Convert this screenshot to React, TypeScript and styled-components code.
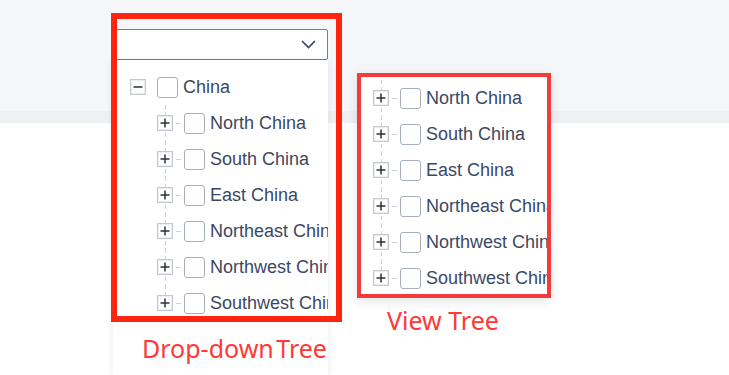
import styled, { createGlobalStyle } from "styled-components";

const GlobalStyle = createGlobalStyle`
  html, body {
    margin: 0;
    padding: 0;
  }
  body {
    font-family: "Liberation Sans", Arial, sans-serif;
    background: #fff;
  }
`;

type Node = {
  label: string;
  expanded?: boolean;
  children?: Node[];
};

const regions: Node[] = [
  { label: "North China" },
  { label: "South China" },
  { label: "East China" },
  { label: "Northeast China" },
  { label: "Northwest China" },
  { label: "Southwest China" },
];

const china: Node = { label: "China", expanded: true, children: regions };

const App = () => {
  return (
    <Page>
      <GlobalStyle />
      <Stage>
        <DropColumn>
          <Select>
            <Chevron width="15" height="9" viewBox="0 0 15 9">
              <path d="M1 1 L7.5 7.5 L14 1" fill="none" stroke="#3b4863" strokeWidth="1.7" />
            </Chevron>
          </Select>
          <DropPanel>
            <Tree $top={9} $left={17}>
              <TreeRow node={china} level={0} last />
              {china.children!.map((n, i) => (
                <TreeRow key={n.label} node={n} level={1} last={i === regions.length - 1} />
              ))}
            </Tree>
            <Caption $indent={29} $gap={12} $tight>
              Drop-down Tree
            </Caption>
          </DropPanel>
          <RedFrame />
        </DropColumn>

        <ViewColumn>
          <ViewPanel>
            <Tree $top={3} $left={12}>
              {regions.map((n, i) => (
                <TreeRow key={n.label} node={n} level={0} lined last={i === regions.length - 1} />
              ))}
            </Tree>
          </ViewPanel>
          <Caption $indent={30} $gap={7}>
            View Tree
          </Caption>
        </ViewColumn>
      </Stage>
    </Page>
  );
};

const TreeRow = ({
  node,
  level,
  last,
  lined,
}: {
  node: Node;
  level: number;
  last?: boolean;
  lined?: boolean;
}) => {
  const showLine = level > 0 || !!lined;
  return (
    <Row $level={level}>
      <ToggleCell $line={showLine} $last={!!last}>
        <ToggleIcon open={!!node.expanded} />
      </ToggleCell>
      <Check />
      <Label>{node.label}</Label>
    </Row>
  );
};

const ToggleIcon = ({ open }: { open: boolean }) => (
  <ToggleSvg width="16" height="16" viewBox="0 0 16 16">
    <rect x="0.5" y="0.5" width="15" height="15" fill="#fff" stroke="#c4c8d0" />
    <rect x="1.5" y="1.5" width="13" height="13" fill="none" stroke="#eceef2" />
    <line x1="3.5" y1="8" x2="12.5" y2="8" stroke="#2a2f38" strokeWidth="1.5" />
    {!open && <line x1="8" y1="3.5" x2="8" y2="12.5" stroke="#2a2f38" strokeWidth="1.5" />}
  </ToggleSvg>
);

export default App;

const Page = styled.div`
  min-height: 100vh;
  background: linear-gradient(
    to bottom,
    #f5f6f8 0,
    #f5f6f8 111px,
    #eff0f2 111px,
    #eff0f2 123px,
    #ffffff 123px
  );
`;

const Stage = styled.div`
  display: flex;
  align-items: flex-start;
  gap: 29px;
  padding: 29px 0 0 113px;
`;

const DropColumn = styled.div`
  position: relative;
  width: 215px;
  display: flex;
  flex-direction: column;
`;

const Select = styled.div`
  box-sizing: border-box;
  height: 31px;
  width: 214px;
  margin-left: 1px;
  border: 1px solid #3a87f5;
  border-radius: 2px;
  background: #fff;
  display: flex;
  align-items: center;
  justify-content: flex-end;
  padding-right: 11px;
`;

const Chevron = styled.svg`
  display: block;
`;

const DropPanel = styled.div`
  height: 315px;
  background: #fff;
  box-shadow: 0 2px 8px rgba(20, 30, 50, 0.1);
  overflow: hidden;
`;

const RedFrame = styled.div`
  position: absolute;
  left: -2px;
  top: -16px;
  width: 231px;
  height: 309px;
  box-sizing: border-box;
  border: 6px solid #ff2410;
  pointer-events: none;
`;

const ViewColumn = styled.div`
  margin-top: 44px;
  display: flex;
  flex-direction: column;
`;

const ViewPanel = styled.div`
  box-sizing: border-box;
  width: 194px;
  height: 225px;
  border: 4px solid #f43a3a;
  background: #fff;
  box-shadow: 0 3px 10px rgba(20, 30, 50, 0.12);
  overflow: hidden;
`;

const Tree = styled.div<{ $top: number; $left: number }>`
  display: flex;
  flex-direction: column;
  padding: ${(p) => p.$top}px 0 0 ${(p) => p.$left}px;
`;

const Row = styled.div<{ $level: number }>`
  display: flex;
  align-items: center;
  height: 36px;
  padding-left: ${(p) => p.$level * 27}px;
  white-space: nowrap;
`;

const ToggleCell = styled.div<{ $line: boolean; $last: boolean }>`
  position: relative;
  width: 16px;
  height: 100%;
  display: flex;
  align-items: center;
  margin-right: 11px;
  flex-shrink: 0;

  &::before {
    content: "";
    display: ${(p) => (p.$line ? "block" : "none")};
    position: absolute;
    left: 8px;
    top: 0;
    width: 1px;
    height: ${(p) => (p.$last ? "50%" : "100%")};
    background: repeating-linear-gradient(
      to bottom,
      #cdd1d8 0,
      #cdd1d8 4px,
      transparent 4px,
      transparent 7px
    );
  }

  &::after {
    content: "";
    display: ${(p) => (p.$line ? "block" : "none")};
    position: absolute;
    left: 19px;
    top: 50%;
    width: 5px;
    height: 1px;
    background: #cdd1d8;
  }
`;

const ToggleSvg = styled.svg`
  position: relative;
  z-index: 1;
  display: block;
`;

const Check = styled.span`
  box-sizing: border-box;
  width: 21px;
  height: 21px;
  border: 1px solid #a8afbc;
  border-radius: 3px;
  background: #fff;
  flex-shrink: 0;
  margin-right: 5px;
`;

const Label = styled.span`
  font-size: 18px;
  color: #3b4863;
  line-height: 1;
`;

const Caption = styled.div<{ $indent: number; $gap: number; $tight?: boolean }>`
  font-family: "Noto Sans", "Open Sans", sans-serif;
  font-size: 25px;
  line-height: 30px;
  color: #ff3838;
  padding-left: ${(p) => p.$indent}px;
  margin-top: ${(p) => p.$gap}px;
  word-spacing: ${(p) => (p.$tight ? "-4px" : "0")};
  white-space: nowrap;
`;
